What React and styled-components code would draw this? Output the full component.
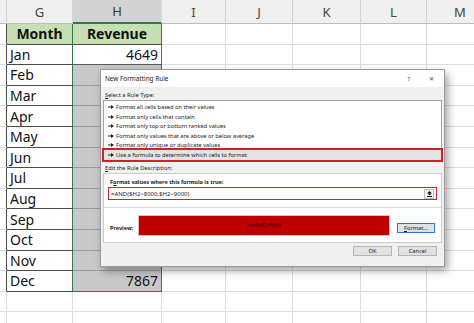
import React from 'react'
import styled, { createGlobalStyle, css } from 'styled-components'

const GlobalStyle = createGlobalStyle`
  html, body {
    margin: 0;
    padding: 0;
    background: #ffffff;
  }
`

const columns = ['', 'G', 'H', 'I', 'J', 'K', 'L', 'M']
const months = ['Jan', 'Feb', 'Mar', 'Apr', 'May', 'Jun', 'Jul', 'Aug', 'Sep', 'Oct', 'Nov', 'Dec']
const revenue = { Jan: 4649, Dec: 7867 }

const ruleTypes = [
  'Format all cells based on their values',
  'Format only cells that contain',
  'Format only top or bottom ranked values',
  'Format only values that are above or below average',
  'Format only unique or duplicate values',
  'Use a formula to determine which cells to format',
]

const GREEN = '#2f7d4e'

const Arrow = () => (
  <svg width="6" height="4" viewBox="0 0 6 4">
    <path d="M0 1.6h3.2v0.8H0z M3 0l3 2-3 2z" fill="#222" />
  </svg>
)

const CollapseIcon = () => (
  <svg width="5" height="6" viewBox="0 0 5 6">
    <path d="M2.5 0L5 2.6H3.4V4.2H1.6V2.6H0z M0 5h5v1H0z" fill="#111" />
  </svg>
)

const Sheet = () => {
  const rows = []

  rows.push(
    columns.map((letter, c) => (
      <ColumnHeader key={`h${c}`} $active={letter === 'H'}>
        {letter}
      </ColumnHeader>
    ))
  )

  rows.push([
    <Cell key="t0" $edge />,
    <Cell key="t1" $kind="title">Month</Cell>,
    <Cell key="t2" $kind="title" $inH>Revenue</Cell>,
    ...columns.slice(3).map((_, i) => <Cell key={`t${i + 3}`} />),
  ])

  months.forEach((month, i) => {
    const last = i === months.length - 1
    rows.push([
      <Cell key={`${month}0`} $edge />,
      <Cell key={`${month}1`} $kind="label" $last={last}>
        {month}
      </Cell>,
      <Cell key={`${month}2`} $kind={i === 0 ? 'value' : 'selected'} $inH $last={last}>
        {revenue[month] || ''}
      </Cell>,
      ...columns.slice(3).map((_, c) => <Cell key={`${month}${c + 3}`} />),
    ])
  })

  for (let r = 0; r < 2; r++) {
    rows.push(columns.map((_, c) => <Cell key={`e${r}${c}`} />))
  }

  return <Grid>{rows.flat()}</Grid>
}

const Dialog = () => (
  <Window>
    <TitleBar>
      <span>New Formatting Rule</span>
      <TitleButtons>
        <span>?</span>
        <span>✕</span>
      </TitleButtons>
    </TitleBar>

    <Body>
      <Label>
        <u>S</u>elect a Rule Type:
      </Label>
      <RuleList>
        {ruleTypes.map((rule, i) => (
          <RuleItem key={rule} $selected={i === ruleTypes.length - 1}>
            <Arrow />
            {rule}
          </RuleItem>
        ))}
      </RuleList>

      <Label>
        <u>E</u>dit the Rule Description:
      </Label>
      <Panel>
        <BoldLabel>
          F<u>o</u>rmat values where this formula is true:
        </BoldLabel>
        <FormulaInput>
          <span>=AND($H2&gt;8000,$H2&lt;9000)</span>
          <CollapseButton>
            <CollapseIcon />
          </CollapseButton>
        </FormulaInput>

        <PreviewRow>
          <BoldLabel>Preview:</BoldLabel>
          <PreviewBox>AaBbCcYyZz</PreviewBox>
          <DialogButton $focused>
            <u>F</u>ormat...
          </DialogButton>
        </PreviewRow>
      </Panel>

      <Footer>
        <DialogButton $wide>OK</DialogButton>
        <DialogButton $wide>Cancel</DialogButton>
      </Footer>
    </Body>
  </Window>
)

const App = () => (
  <>
    <GlobalStyle />
    <Page>
      <Sheet />
      <Dialog />
    </Page>
  </>
)

const Page = styled.div`
  position: relative;
  width: 474px;
  height: 323px;
  overflow: hidden;
  background: #ffffff;
`

const Grid = styled.div`
  display: grid;
  grid-template-columns: 7px 66px 89px 64px 67px 68px 66px 67px;
  grid-template-rows: 24px repeat(15, 20.6px);
`

const ColumnHeader = styled.div`
  box-sizing: border-box;
  display: flex;
  align-items: center;
  justify-content: center;
  background: #efefef;
  border-right: 1px solid #d4d4d4;
  border-bottom: 1px solid #bcbcbc;
  color: #444444;
  font: 13px 'Noto Sans', sans-serif;

  ${({ $active }) =>
    $active &&
    css`
      background: #d3d3d3;
      border-bottom: 2px solid ${GREEN};
      color: #3a3a3a;
    `}
`

const Cell = styled.div`
  box-sizing: border-box;
  display: flex;
  align-items: center;
  padding: 0 3px;
  overflow: hidden;
  white-space: nowrap;
  background: #ffffff;
  border-right: 1px solid #dcdcdc;
  border-bottom: 1px solid #dcdcdc;
  color: #111111;
  font: 14px 'Noto Sans', sans-serif;

  ${({ $edge }) =>
    $edge &&
    css`
      border-right-color: #4a4a4a;
    `}

  ${({ $kind }) =>
    $kind === 'title' &&
    css`
      justify-content: center;
      background: #c6e0b4;
      border-bottom-color: #4a4a4a;
      font-weight: 700;
    `}

  ${({ $kind }) =>
    $kind === 'label' &&
    css`
      border-bottom-color: #4a4a4a;
    `}

  ${({ $kind }) =>
    ($kind === 'value' || $kind === 'selected') &&
    css`
      justify-content: flex-end;
      border-bottom-color: #5a5a5a;
    `}

  ${({ $kind }) =>
    $kind === 'selected' &&
    css`
      background: #c8c8c8;
      border-bottom-color: #9a9a9a;
    `}

  ${({ $kind }) =>
    ($kind === 'title' || $kind === 'label') &&
    css`
      border-right: 1px solid ${GREEN};
    `}

  ${({ $inH }) =>
    $inH &&
    css`
      border-right: 1px solid ${GREEN};
    `}

  ${({ $last, $inH }) =>
    $last &&
    css`
      border-bottom: 1px solid ${$inH ? GREEN : '#4a4a4a'};
    `}
`

const Window = styled.div`
  position: absolute;
  left: 100px;
  top: 69px;
  width: 345px;
  height: 198px;
  box-sizing: border-box;
  display: flex;
  flex-direction: column;
  background: #f0f0f0;
  border: 1px solid #9a9a9a;
  box-shadow: 3px 4px 8px rgba(0, 0, 0, 0.35);
  font-family: 'Noto Sans', sans-serif;
  color: #1a1a1a;
`

const TitleBar = styled.div`
  height: 17px;
  display: flex;
  align-items: center;
  justify-content: space-between;
  padding: 0 10px 0 4px;
  background: #ffffff;
  font-size: 6.4px;
`

const TitleButtons = styled.div`
  display: flex;
  gap: 19px;
  font-size: 6px;
  color: #444444;
`

const Body = styled.div`
  flex: 1;
  display: flex;
  flex-direction: column;
  padding: 2px 2px 0;
`

const Label = styled.div`
  height: 11px;
  display: flex;
  align-items: center;
  padding-left: 2px;
  font-size: 5.7px;
`

const RuleList = styled.div`
  height: 62px;
  box-sizing: border-box;
  padding-top: 1.2px;
  background: #ffffff;
  border: 1px solid #a3a3a3;
`

const RuleItem = styled.div`
  height: 9.6px;
  display: flex;
  align-items: center;
  gap: 2px;
  padding-left: 4px;
  font-size: 5.7px;

  ${({ $selected }) =>
    $selected &&
    css`
      position: relative;
      background: #e3e3e3;
      outline: 2px solid #d0202c;
      outline-offset: 0;
    `}
`

const Panel = styled.div`
  height: 70px;
  box-sizing: border-box;
  display: flex;
  flex-direction: column;
  background: #ffffff;
  border: 1px solid #cbcbcb;
`

const BoldLabel = styled.div`
  padding: 4px 0 1px 6px;
  font-size: 5.5px;
  font-weight: 700;
  white-space: nowrap;
`

const FormulaInput = styled.div`
  height: 13px;
  box-sizing: border-box;
  margin: 0 4px 7px;
  display: flex;
  align-items: center;
  justify-content: space-between;
  padding: 0 2px 0 2px;
  background: #ffffff;
  border: 1.6px solid #d0202c;
  font-size: 6px;
`

const CollapseButton = styled.div`
  width: 8px;
  height: 8px;
  display: flex;
  align-items: center;
  justify-content: center;
  background: #f4f4f4;
  border: 1px solid #bdbdbd;
`

const PreviewRow = styled.div`
  flex: 1;
  display: flex;
  align-items: center;
  border-top: 1px solid #dadada;

  ${BoldLabel} {
    width: 34px;
    flex-shrink: 0;
    padding: 0 0 0 6px;
    box-sizing: border-box;
    margin-top: 5px;
  }
`

const PreviewBox = styled.div`
  width: 252px;
  height: 21px;
  flex-shrink: 0;
  box-sizing: border-box;
  margin-right: 7px;
  display: flex;
  align-items: center;
  justify-content: center;
  background: #c00000;
  border: 1px solid #e3b9b9;
  color: #6a0000;
  font-size: 5.7px;
  font-weight: 700;
`

const DialogButton = styled.div`
  width: 38px;
  height: 10px;
  flex-shrink: 0;
  box-sizing: border-box;
  display: flex;
  align-items: center;
  justify-content: center;
  margin-top: 5px;
  background: #e1e1e1;
  border: 1px solid ${({ $focused }) => ($focused ? '#2a7ad5' : '#b5b5b5')};
  font-size: 5.7px;

  ${({ $wide }) =>
    $wide &&
    css`
      width: 39px;
      margin-top: 0;
    `}
`

const Footer = styled.div`
  display: flex;
  justify-content: flex-end;
  gap: 6px;
  padding: 3px 5px 0 0;
`

export default App
